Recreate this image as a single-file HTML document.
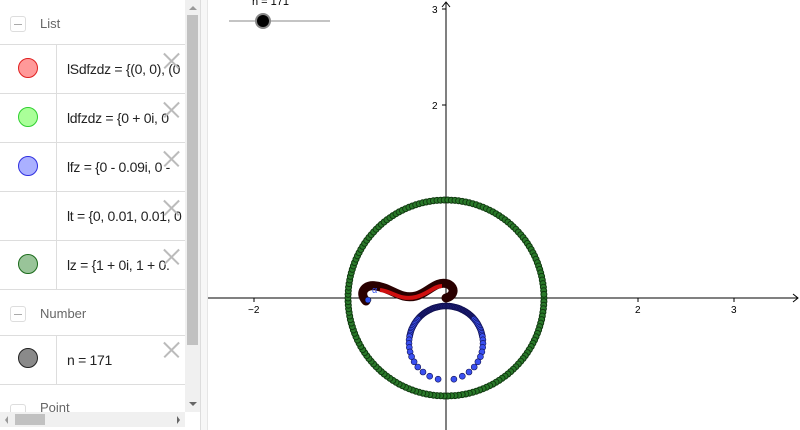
<!DOCTYPE html>
<html><head><meta charset="utf-8"><style>
*{margin:0;padding:0;box-sizing:border-box}
body{width:800px;height:430px;overflow:hidden;background:#fff;font-family:"Liberation Sans",sans-serif;position:relative}
.panel{position:absolute;left:0;top:0;width:185px;height:412px;overflow:hidden;background:#fff}
.hdr{position:absolute;left:0;width:185px;color:#666;font-size:13px}
.hdr .box{position:absolute;left:10px;width:16px;height:16px;border:1px solid #ddd;border-radius:3px}
.hdr .box:after{content:"";position:absolute;left:3px;top:7px;width:8px;height:1px;background:#aaa}
.hdr span{position:absolute;left:40px}
.row{position:absolute;left:0;width:185px;border-top:1px solid #ddd}
.row .sep{position:absolute;left:56px;top:0;bottom:0;width:1px;background:#ddd}
.dot{position:absolute;left:18px;width:20px;height:20px;border-radius:50%}
.row .t{position:absolute;left:67px;font-size:14px;color:#222;white-space:nowrap;letter-spacing:-0.3px}
.x{position:absolute;left:163px;width:16px;height:16px}
.x:before,.x:after{content:"";position:absolute;left:-2px;top:7px;width:21px;height:1.5px;background:#bbb;transform:rotate(45deg)}
.x:after{transform:rotate(-45deg)}
</style></head><body>
<div class="panel">
 <div class="hdr" style="top:0;height:44px"><div class="box" style="top:16px"></div><span style="top:16px">List</span></div>
 <div class="row" style="top:44px;height:49px"><div class="sep"></div><div class="dot" style="top:13px;background:#ff9999;border:1px solid #e02020"></div><div class="t" style="top:16px">lSdfzdz = {(0, 0), (0</div><div class="x" style="top:8px"></div></div>
 <div class="row" style="top:93px;height:49px"><div class="sep"></div><div class="dot" style="top:13px;background:#aaff99;border:1px solid #30d030"></div><div class="t" style="top:16px">ldfzdz = {0 + 0i, 0</div><div class="x" style="top:8px"></div></div>
 <div class="row" style="top:142px;height:49px"><div class="sep"></div><div class="dot" style="top:13px;background:#aab0ff;border:1px solid #3030e0"></div><div class="t" style="top:16px">lfz = {0 - 0.09i, 0 -</div><div class="x" style="top:8px"></div></div>
 <div class="row" style="top:191px;height:49px"><div class="sep"></div><div class="t" style="top:16px">lt = {0, 0.01, 0.01, 0</div><div class="x" style="top:8px"></div></div>
 <div class="row" style="top:240px;height:49px"><div class="sep"></div><div class="dot" style="top:13px;background:#99c499;border:1px solid #1a6a1a"></div><div class="t" style="top:16px">lz = {1 + 0i, 1 + 0.</div><div class="x" style="top:8px"></div></div>
 <div class="hdr" style="top:289px;height:46px;border-top:1px solid #ddd"><div class="box" style="top:16px"></div><span style="top:16px">Number</span></div>
 <div class="row" style="top:335px;height:49px"><div class="sep"></div><div class="dot" style="top:12px;background:#8a8a8a;border:1px solid #222"></div><div class="t" style="top:16px">n = 171</div><div class="x" style="top:6px"></div></div>
 <div class="hdr" style="top:384px;height:40px;border-top:1px solid #ddd"><div class="box" style="top:19px"></div><span style="top:15px">Point</span></div>
</div>
<div style="position:absolute;left:185px;top:0;width:15px;height:412px;background:#f0f0f0"></div>
<div style="position:absolute;left:187px;top:15px;width:11px;height:330px;background:#c1c1c1"></div>
<div style="position:absolute;left:189px;top:6px;width:0;height:0;border-left:4px solid transparent;border-right:4px solid transparent;border-bottom:4px solid #999"></div>
<div style="position:absolute;left:189px;top:402px;width:0;height:0;border-left:4px solid transparent;border-right:4px solid transparent;border-top:4px solid #666"></div>
<div style="position:absolute;left:0;top:412px;width:185px;height:15px;background:#f0f0f0"></div>
<div style="position:absolute;left:15px;top:414px;width:30px;height:11px;background:#c1c1c1"></div>
<div style="position:absolute;left:5px;top:416px;border-top:4px solid transparent;border-bottom:4px solid transparent;border-right:3px solid #999"></div>
<div style="position:absolute;left:177px;top:416px;border-top:4px solid transparent;border-bottom:4px solid transparent;border-left:3px solid #666"></div>
<div style="position:absolute;left:185px;top:412px;width:15px;height:18px;background:#fff"></div>
<div style="position:absolute;left:0;top:427px;width:200px;height:3px;background:#fff"></div>
<div style="position:absolute;left:200px;top:0;width:8px;height:430px;background:#f7f7f7;border-left:1px solid #ddd;border-right:1px solid #e6e6e6"></div>

<svg id="g" style="position:absolute;left:0;top:0" width="800" height="430" xmlns="http://www.w3.org/2000/svg" font-family="Liberation Sans, sans-serif">
 <line x1="208" y1="298" x2="798" y2="298" stroke="#000" stroke-width="1"/>
 <path d="M793 294 L798 298 L793 302" fill="none" stroke="#000"/>
 <line x1="446" y1="2" x2="446" y2="430" stroke="#000" stroke-width="1"/>
 <path d="M442 7 L446 2 L450 7" fill="none" stroke="#000"/>
 <g font-size="10" fill="#000">
  <line x1="254" y1="298" x2="254" y2="302" stroke="#000"/><text x="248" y="313">−2</text>
  <line x1="638" y1="298" x2="638" y2="302" stroke="#000"/><text x="635" y="313">2</text>
  <line x1="734" y1="298" x2="734" y2="302" stroke="#000"/><text x="731" y="313">3</text>
  <line x1="442" y1="105" x2="446" y2="105" stroke="#000"/><text x="432" y="109">2</text>
  <line x1="442" y1="9" x2="446" y2="9" stroke="#000"/><text x="432" y="13">3</text>
 </g>
 <text x="252" y="5" font-size="11" fill="#000">n = 171</text>
 <line x1="229" y1="21" x2="330" y2="21" stroke="#888" stroke-width="1"/>
 <circle cx="263" cy="21" r="8" fill="#888"/>
 <circle cx="263" cy="21" r="6" fill="#000"/>
 <g id="dots"></g>
 <path d="M366 301 C358 292 366 284 376 286 C392 288 400 300 416 296 C428 293 436 280 448 284 C456 288 454 296 446 298" fill="none" stroke="#2a0000" stroke-width="9" stroke-linecap="round"/>
 <path d="M380 290 C392 291 400 301 416 297 C428 294 434 286 442 286" fill="none" stroke="#d01010" stroke-width="4"/>
 <circle cx="368" cy="300" r="3" fill="#3050f0" stroke="#000" stroke-width=".5"/>
 <text x="372" y="293" font-size="9" fill="#3050f0">α</text>
</svg>
<script>
var g=document.getElementById('dots'),h='';
for(var i=0;i<170;i++){var a=i/170*2*Math.PI;h+='<circle cx="'+(446+98*Math.cos(a)).toFixed(1)+'" cy="'+(298+98*Math.sin(a)).toFixed(1)+'" r="3" fill="#2a7a2a" stroke="#103a10" stroke-width="1"/>';}
var angs=[];for(var d=-90;d<=-12;d+=2.5)angs.push(d);
var d=-10,st=5;while(d<82){angs.push(d);d+=st;st*=1.12;}
angs.forEach(function(dd){var a=dd*Math.PI/180;
 [1,-1].forEach(function(sg){var x=446+sg*37*Math.cos(a),y=343+37*Math.sin(a);
 var dark=dd<-40;
 h+='<circle cx="'+x.toFixed(1)+'" cy="'+y.toFixed(1)+'" r="3" fill="'+(dark?'#1a1a70':'#3a50f0')+'" stroke="#101050" stroke-width=".6"/>';});});
g.innerHTML=h;
</script>
</body></html>
